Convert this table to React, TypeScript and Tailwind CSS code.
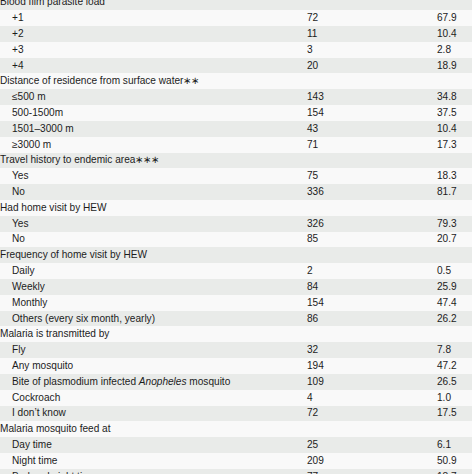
import React from "react";

type Row = { label: React.ReactNode; n?: string; p?: string; cat?: boolean };

const rows: Row[] = [
  { label: "Blood film parasite load", cat: true },
  { label: "+1", n: "72", p: "67.9" },
  { label: "+2", n: "11", p: "10.4" },
  { label: "+3", n: "3", p: "2.8" },
  { label: "+4", n: "20", p: "18.9" },
  { label: "Distance of residence from surface water\u2217\u2217", cat: true },
  { label: "\u2264500 m", n: "143", p: "34.8" },
  { label: "500-1500m", n: "154", p: "37.5" },
  { label: "1501\u20133000 m", n: "43", p: "10.4" },
  { label: "\u22653000 m", n: "71", p: "17.3" },
  { label: "Travel history to endemic area\u2217\u2217\u2217", cat: true },
  { label: "Yes", n: "75", p: "18.3" },
  { label: "No", n: "336", p: "81.7" },
  { label: "Had home visit by HEW", cat: true },
  { label: "Yes", n: "326", p: "79.3" },
  { label: "No", n: "85", p: "20.7" },
  { label: "Frequency of home visit by HEW", cat: true },
  { label: "Daily", n: "2", p: "0.5" },
  { label: "Weekly", n: "84", p: "25.9" },
  { label: "Monthly", n: "154", p: "47.4" },
  { label: "Others (every six month, yearly)", n: "86", p: "26.2" },
  { label: "Malaria is transmitted by", cat: true },
  { label: "Fly", n: "32", p: "7.8" },
  { label: "Any mosquito", n: "194", p: "47.2" },
  {
    label: (
      <>
        Bite of plasmodium infected <i>Anopheles</i> mosquito
      </>
    ),
    n: "109",
    p: "26.5",
  },
  { label: "Cockroach", n: "4", p: "1.0" },
  { label: "I don\u2019t know", n: "72", p: "17.5" },
  { label: "Malaria mosquito feed at", cat: true },
  { label: "Day time", n: "25", p: "6.1" },
  { label: "Night time", n: "209", p: "50.9" },
  { label: "Bed and night time", n: "77", p: "18.7" },
];

export default function App() {
  return (
    <div
      className="w-[474px] h-[474px] overflow-hidden bg-white text-[#1c1c1c]"
      style={{ fontFamily: '"Liberation Sans", Arial, sans-serif' }}
    >
      <div className="mt-[-5.6px] w-[472px] text-[10.1px] leading-none">
        {rows.map((r, i) => (
          <div
            key={i}
            className={`grid grid-cols-[307px_130px_35px] h-[15.82px] items-center ${
              i % 2 === 0 ? "bg-[#e9ebe9]" : "bg-[#f9f9f9]"
            }`}
          >
            <div className={`whitespace-nowrap ${r.cat ? "pl-0" : "pl-[12px]"}`}>{r.label}</div>
            <div>{r.n ?? ""}</div>
            <div>{r.p ?? ""}</div>
          </div>
        ))}
      </div>
    </div>
  );
}
